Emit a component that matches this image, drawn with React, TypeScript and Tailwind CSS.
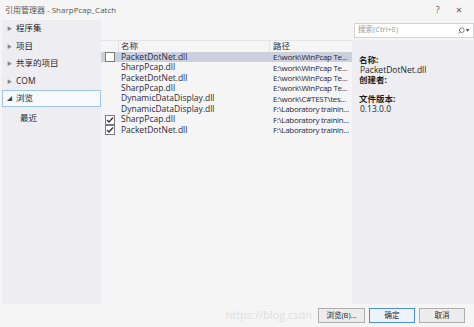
import { Search } from 'lucide-react';

const rows = [
  { name: 'PacketDotNet.dll', path: 'E:\\work\\WinPcap Te...', check: 'off', sel: true },
  { name: 'SharpPcap.dll', path: 'E:\\work\\WinPcap Te...', check: 'none' },
  { name: 'PacketDotNet.dll', path: 'E:\\work\\WinPcap Te...', check: 'none' },
  { name: 'SharpPcap.dll', path: 'E:\\work\\WinPcap Te...', check: 'none' },
  { name: 'DynamicDataDisplay.dll', path: 'E:\\work\\C#TEST\\tes...', check: 'none' },
  { name: 'DynamicDataDisplay.dll', path: 'F:\\Laboratory trainin...', check: 'none' },
  { name: 'SharpPcap.dll', path: 'F:\\Laboratory trainin...', check: 'on' },
  { name: 'PacketDotNet.dll', path: 'F:\\Laboratory trainin...', check: 'on' },
];

const navItems = ['程序集', '项目', '共享的项目', 'COM'];

function CheckBox({ on }: { on: boolean }) {
  return (
    <div className="w-[10px] h-[10px] border border-[#7a7a7a] bg-white flex items-center justify-center">
      {on && (
        <svg width="8" height="8" viewBox="0 0 8 8">
          <path d="M1 4 L3 6 L7 1.5" stroke="#333" strokeWidth="1.3" fill="none" />
        </svg>
      )}
    </div>
  );
}

export default function App() {
  return (
    <div
      className="w-[474px] h-[327px] bg-[#f5f5f5] flex flex-col text-[#1e1e1e] overflow-hidden"
      style={{ fontFamily: '"Open Sans", "Noto Sans CJK SC", sans-serif' }}
    >
      {/* 标题栏 */}
      <div className="h-[20px] flex items-center justify-between pl-[5px] pr-[12px] text-[8px] text-[#555]">
        <span>引用管理器 - SharpPcap_Catch</span>
        <div className="flex items-center gap-[16px] text-[9px] text-[#555]">
          <span>?</span>
          <span className="text-[11px]">×</span>
        </div>
      </div>

      <div className="flex flex-1 min-h-0">
        {/* 左侧导航 */}
        <div className="ml-[2px] w-[99px] shrink-0 bg-[#eeeef2] text-[8.5px]">
          {navItems.map((t) => (
            <div key={t} className="h-[17.5px] flex items-center pl-[5px]">
              <span className="text-[5px] text-[#888] mr-[4px]">▶</span>
              <span>{t}</span>
            </div>
          ))}
          <div className="h-[17px] flex items-center pl-[4px] border border-[#9fc5ea] bg-[#f7f9fc]">
            <span className="text-[5px] text-[#444] mr-[4px]">◢</span>
            <span>浏览</span>
          </div>
          <div className="h-[22px] flex items-center pl-[18px]">最近</div>
        </div>

        {/* 右侧 */}
        <div className="flex-1 flex flex-col">
          <div className="h-[20px] flex justify-end items-center">
            <div className="w-[120px] h-[15px] bg-white border border-[#d4d4d4] flex items-center justify-between pl-[3px] pr-[4px] text-[7.5px] text-[#9a9a9a]">
              <span>搜索(Ctrl+E)</span>
              <span className="flex items-center text-[#444]">
                <Search size={7} strokeWidth={2.2} className="-scale-x-100" />
                <span className="text-[6px] ml-[1px]">▾</span>
              </span>
            </div>
          </div>
          <div className="flex flex-1">
            {/* 列表 */}
            <div className="w-[251px] shrink-0 bg-[#f5f5f5] text-[8.5px]">
              <div className="h-[12px] flex items-center border-t border-[#e4e4e4]">
                <div className="w-[18px] shrink-0 h-full border-r border-[#e4e4e4]" />
                <div className="w-[150px] shrink-0 pl-[2px] text-[#333]">名称</div>
                <div className="pl-[3px] text-[#333] border-l border-[#e4e4e4] h-full flex items-center">路径</div>
              </div>
              {rows.map((r, i) => (
                <div
                  key={i}
                  className={`h-[10.4px] flex items-center ${r.sel ? 'bg-[#cdd0dc]' : ''}`}
                >
                  <div className="w-[18px] shrink-0 flex justify-center">
                    {r.check !== 'none' && <CheckBox on={r.check === 'on'} />}
                  </div>
                  <div className="w-[150px] shrink-0 pl-[2px] text-[#2a2a3a] whitespace-nowrap">{r.name}</div>
                  <div className="pl-[4px] text-[8px] tracking-[-0.3px] text-[#2a2a3a] whitespace-nowrap">{r.path}</div>
                </div>
              ))}
            </div>
            {/* 详细信息 */}
            <div className="flex-1 bg-[#eeeef2] pl-[7px] pt-[15px] text-[8.5px] leading-[10px]">
              <div className="font-bold">名称:</div>
              <div className="pl-[1px]">PacketDotNet.dll</div>
              <div className="font-bold">创建者:</div>
              <div className="h-[9px]" />
              <div className="font-bold">文件版本:</div>
              <div className="pl-[1px]">0.13.0.0</div>
            </div>
          </div>
        </div>
      </div>

      {/* 底部按钮 */}
      <div className="h-[23px] flex items-center justify-end pr-[9px] gap-[4px] text-[7.5px]">
        <span className="mr-[2px] text-[11px] text-[#e0e0e0] whitespace-nowrap">https://blog.csdn</span>
        <div className="w-[47px] shrink-0 h-[15px] bg-[#ececec] border border-[#adadad] flex items-center justify-center">浏览(B)...</div>
        <div className="w-[46px] shrink-0 h-[15px] bg-[#eef3f9] border border-[#4a90d9] flex items-center justify-center">确定</div>
        <div className="w-[46px] shrink-0 h-[15px] bg-[#ececec] border border-[#adadad] flex items-center justify-center">取消</div>
      </div>
    </div>
  );
}
